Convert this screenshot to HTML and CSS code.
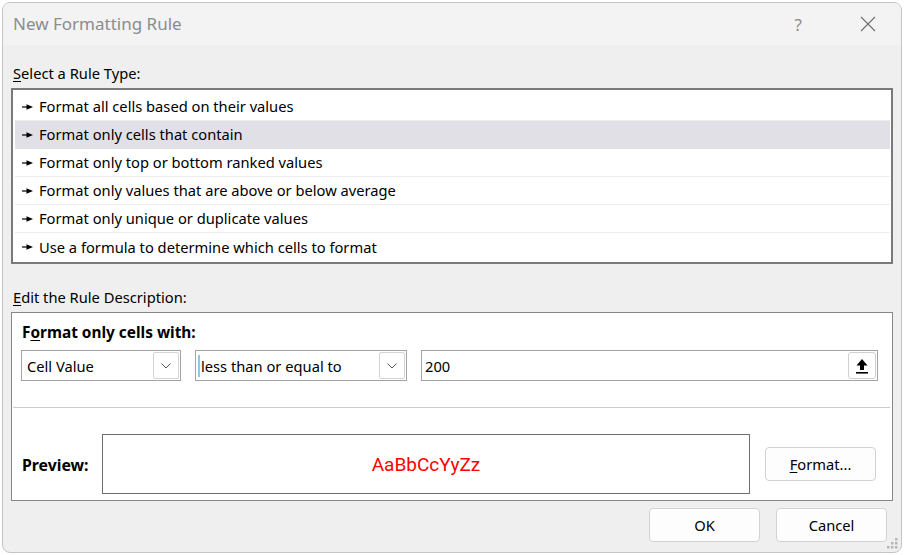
FILE: index.html
```html
<!DOCTYPE html>
<html>
<head>
<meta charset="utf-8">
<title>New Formatting Rule</title>
<link rel="stylesheet" href="styles.css">
</head>
<body>
<div class="dialog">
  <div class="titlebar">
    <div class="title">New Formatting Rule</div>
    <div class="title-actions">
      <span class="help">?</span>
      <svg class="close" width="16" height="16" viewBox="0 0 16 16"><path d="M1 1 L15 15 M15 1 L1 15" stroke="#6e6e6e" stroke-width="1.1" fill="none"/></svg>
    </div>
  </div>
  <div class="body">
    <div class="label"><u>S</u>elect a Rule Type:</div>
    <div class="list">
      <div class="row"><svg class="bullet" width="12" height="6" viewBox="0 0 12 6"><rect x="0" y="2.4" width="5" height="1.2" fill="#000"/><path d="M4.5 0.3 L11 3 L4.5 5.7 Z" fill="#000"/></svg>Format all cells based on their values</div>
      <div class="row selected"><svg class="bullet" width="12" height="6" viewBox="0 0 12 6"><rect x="0" y="2.4" width="5" height="1.2" fill="#000"/><path d="M4.5 0.3 L11 3 L4.5 5.7 Z" fill="#000"/></svg>Format only cells that contain</div>
      <div class="row"><svg class="bullet" width="12" height="6" viewBox="0 0 12 6"><rect x="0" y="2.4" width="5" height="1.2" fill="#000"/><path d="M4.5 0.3 L11 3 L4.5 5.7 Z" fill="#000"/></svg>Format only top or bottom ranked values</div>
      <div class="row"><svg class="bullet" width="12" height="6" viewBox="0 0 12 6"><rect x="0" y="2.4" width="5" height="1.2" fill="#000"/><path d="M4.5 0.3 L11 3 L4.5 5.7 Z" fill="#000"/></svg>Format only values that are above or below average</div>
      <div class="row"><svg class="bullet" width="12" height="6" viewBox="0 0 12 6"><rect x="0" y="2.4" width="5" height="1.2" fill="#000"/><path d="M4.5 0.3 L11 3 L4.5 5.7 Z" fill="#000"/></svg>Format only unique or duplicate values</div>
      <div class="row"><svg class="bullet" width="12" height="6" viewBox="0 0 12 6"><rect x="0" y="2.4" width="5" height="1.2" fill="#000"/><path d="M4.5 0.3 L11 3 L4.5 5.7 Z" fill="#000"/></svg>Use a formula to determine which cells to format</div>
    </div>
    <div class="label label2"><u>E</u>dit the Rule Description:</div>
    <div class="panel">
      <div class="panel-title">F<u>o</u>rmat only cells with:</div>
      <div class="controls">
        <div class="combo combo1">
          <span class="combo-text">Cell Value</span>
          <span class="drop"><svg width="10" height="6" viewBox="0 0 10 6"><path d="M0.5 0.5 L5 5 L9.5 0.5" stroke="#555" stroke-width="1" fill="none"/></svg></span>
        </div>
        <div class="combo combo2">
          <span class="combo-text"><span class="caret"></span>less than or equal to</span>
          <span class="drop"><svg width="10" height="6" viewBox="0 0 10 6"><path d="M0.5 0.5 L5 5 L9.5 0.5" stroke="#555" stroke-width="1" fill="none"/></svg></span>
        </div>
        <div class="combo input3">
          <span class="combo-text">200</span>
          <span class="refbtn"><svg width="14" height="16" viewBox="0 0 14 16"><path d="M7 1 L12.5 7.5 L9 7.5 L9 12 L5 12 L5 7.5 L1.5 7.5 Z" fill="#000"/><rect x="1" y="14" width="12" height="1.6" fill="#000"/></svg></span>
        </div>
      </div>
      <div class="sep"></div>
      <div class="preview-row">
        <div class="preview-label">Preview:</div>
        <div class="preview-box">AaBbCcYyZz</div>
        <button class="btn fmt"><u>F</u>ormat...</button>
      </div>
    </div>
    <div class="footer">
      <button class="btn ok">OK</button>
      <button class="btn cancel">Cancel</button>
    </div>
  </div>
  <svg class="grip" width="12" height="12" viewBox="0 0 12 12">
    <rect x="8" y="0" width="2.5" height="2.5" fill="#b5b5b5"/>
    <rect x="4" y="4" width="2.5" height="2.5" fill="#b5b5b5"/>
    <rect x="8" y="4" width="2.5" height="2.5" fill="#b5b5b5"/>
    <rect x="0" y="8" width="2.5" height="2.5" fill="#b5b5b5"/>
    <rect x="4" y="8" width="2.5" height="2.5" fill="#b5b5b5"/>
    <rect x="8" y="8" width="2.5" height="2.5" fill="#b5b5b5"/>
  </svg>
</div>
</body>
</html>
```

FILE: styles.css
```css
* { box-sizing: border-box; }
html, body { margin: 0; padding: 0; }
body {
  width: 904px;
  height: 555px;
  overflow: hidden;
  background: #ffffff;
  font-family: "Noto Sans", "Open Sans", sans-serif;
  font-size: 14.7px;
  color: #000;
  padding: 2px 2px 0 2px;
}
.dialog {
  position: relative;
  width: 900px;
  height: 551px;
  border: 1px solid #c4c4c4;
  border-radius: 8px;
  background: #efefef;
  overflow: hidden;
  display: flex;
  flex-direction: column;
}
.titlebar {
  height: 42px;
  flex: none;
  background: #f3f3f3;
  display: flex;
  align-items: center;
  justify-content: space-between;
  padding: 0 25px 0 10px;
}
.title {
  font-size: 17px;
  color: #8c8c8c;
  padding-bottom: 2px;
}
.title-actions {
  display: flex;
  align-items: center;
  gap: 58px;
}
.help {
  font-size: 17px;
  color: #8c8c8c;
}
.body {
  flex: 1;
  padding: 0 8px;
  display: flex;
  flex-direction: column;
}
.label {
  height: 20px;
  line-height: 20px;
  margin-top: 18px;
  padding-left: 2px;
}
.label u, .panel-title u, .btn u { text-decoration-thickness: 1px; text-underline-offset: 2px; }
.label2 { margin-top: 23px; }
.list {
  margin-top: 5px;
  height: 176px;
  background: #fff;
  border: 2px solid #7a7a7a;
  padding: 3px 1px 1px 2px;
}
.row {
  height: 28px;
  line-height: 27px;
  border-bottom: 1px solid #ededed;
  padding-left: 7px;
  display: flex;
  align-items: center;
  white-space: nowrap;
}
.row.selected { background: #e1e0e6; border-bottom-color: #e1e0e6; }
.row:last-child { border-bottom: none; }
.bullet { margin-right: 5px; flex: none; }
.panel {
  margin-top: 5px;
  height: 189px;
  background: #fff;
  border: 1px solid #878787;
  display: flex;
  flex-direction: column;
}
.panel-title {
  font-weight: bold;
  font-size: 15.4px;
  height: 20px;
  line-height: 20px;
  margin-top: 10px;
  padding-left: 10px;
}
.controls {
  margin-top: 7px;
  display: flex;
  gap: 14px;
  padding-left: 9px;
}
.combo {
  height: 31px;
  border: 1px solid #a3a3a3;
  background: #fff;
  display: flex;
  align-items: center;
  justify-content: space-between;
  padding: 1px 1px 1px 5px;
  position: relative;
}
.combo1 { width: 160px; }
.combo2 { width: 212px; }
.input3 { width: 457px; padding-left: 3px; }
.combo-text { display: flex; align-items: center; white-space: nowrap; }
.caret {
  display: inline-block;
  width: 2px;
  height: 22px;
  background: #8fc8ec;
  margin-right: 1px;
  margin-left: -3px;
}
.drop {
  width: 26px;
  height: 27px;
  border: 1px solid #d4d4d4;
  border-radius: 2px;
  display: flex;
  align-items: center;
  justify-content: center;
  padding-top: 1px;
}
.refbtn {
  width: 28px;
  height: 27px;
  border: 1px solid #d0d0d0;
  border-radius: 3px;
  display: flex;
  align-items: center;
  justify-content: center;
}
.sep {
  margin: 26px 2px 0 1px;
  height: 1px;
  background: #cbcbcb;
}
.preview-row {
  margin-top: 26px;
  display: flex;
  align-items: center;
  padding-left: 10px;
}
.preview-label {
  font-weight: bold;
  font-size: 15.8px;
  width: 80px;
  padding-top: 1px;
}
.preview-box {
  width: 648px;
  height: 60px;
  border: 1px solid #6e6e6e;
  display: flex;
  align-items: center;
  justify-content: center;
  color: #ff0000;
  font-family: Roboto, "Noto Sans", sans-serif;
  font-size: 19px;
  padding-top: 1px;
}
.btn {
  font-family: "Noto Sans", "Open Sans", sans-serif;
  font-size: 14.7px;
  color: #000;
  background: #fdfdfd;
  border: 1px solid #d2d2d2;
  border-radius: 4px;
  width: 111px;
  height: 34px;
  padding: 0;
}
.fmt { margin-left: 15px; }
.footer {
  margin-top: 7px;
  display: flex;
  justify-content: flex-end;
  gap: 16px;
  padding-right: 6px;
}
.grip {
  position: absolute;
  right: 2px;
  bottom: 2px;
}
```
